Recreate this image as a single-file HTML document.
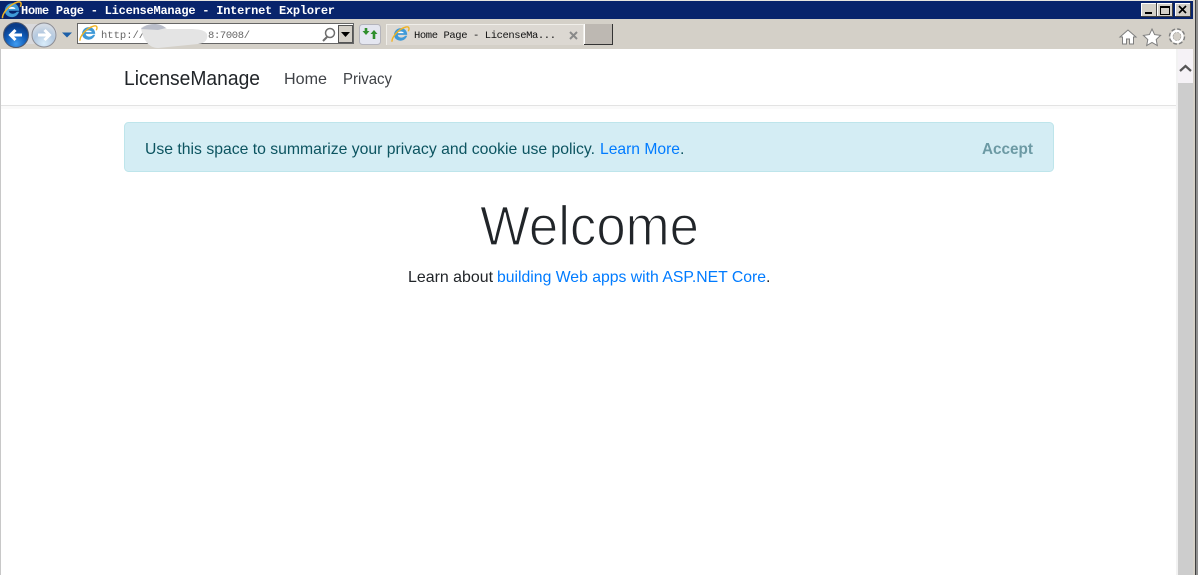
<!DOCTYPE html>
<html><head><meta charset="utf-8"><title>Home Page - LicenseManage</title>
<style>
html,body{margin:0;padding:0;width:1198px;height:575px;overflow:hidden;background:#fff}
svg{display:block}
.u{font-family:"Liberation Sans",sans-serif}
.m{font-family:"Liberation Mono",monospace}
</style></head><body>
<svg width="1198" height="575" viewBox="0 0 1198 575" xmlns="http://www.w3.org/2000/svg">
<defs>
<radialGradient id="b1" cx="50%" cy="85%" r="70%"><stop offset="0" stop-color="#3f9bf0"/><stop offset=".6" stop-color="#0f5cb8"/><stop offset="1" stop-color="#0a3c88"/></radialGradient>
<radialGradient id="b2" cx="50%" cy="85%" r="75%"><stop offset="0" stop-color="#d8ecfa"/><stop offset=".6" stop-color="#b4c9e0"/><stop offset="1" stop-color="#d3dbe5"/></radialGradient>
<g id="ie"><path d="M2 8.500C2 4.500 5 2 8.500 2c3.800 0 6 3 6 6.500H5.500c.2 3 4.800 3.500 7 .8h2c-1.500 3.500-4 4.700-6.500 4.700C5 14 2 12 2 8.500z" fill="#3f9ad8"/><path d="M5.500 6.800h5.700C11 4.800 6 4.500 5.500 6.800z" fill="#fff"/><path d="M0 15C-.5 11 6 3 13 1c3-.8 4 1 2.500 4" fill="none" stroke="#f0b323" stroke-width="1.300"/></g>
</defs>
<rect width="1198" height="575" fill="#fff"/>
<!-- chrome -->
<rect width="1198" height="49" fill="#d4d0c8"/>
<rect x="0" y="0" width="1193" height="1" fill="#e8e6e0"/>
<rect x="0" y="1" width="1193" height="18" fill="#08246c"/>
<use href="#ie" transform="translate(2.500 1) scale(1.150)"/>
<text class="m" x="21" y="14" font-size="12" font-weight="700" fill="#fff" textLength="314" lengthAdjust="spacing">Home Page - LicenseManage - Internet Explorer</text>
<!-- window buttons -->
<g>
<rect x="1141" y="3" width="16" height="14" fill="#d4d0c8"/>
<path d="M1141.500 17V3.500h15" stroke="#fff" fill="none"/><path d="M1156.500 3v13.500H1141" stroke="#404040" fill="none"/>
<rect x="1145" y="12" width="7" height="2" fill="#000"/>
<rect x="1157" y="3" width="16" height="14" fill="#d4d0c8"/>
<path d="M1157.500 17V3.500h15" stroke="#fff" fill="none"/><path d="M1172.500 3v13.500H1157" stroke="#404040" fill="none"/>
<rect x="1160.500" y="6.500" width="9" height="8" fill="none" stroke="#000"/><rect x="1160" y="6" width="10" height="2" fill="#000"/>
<rect x="1175" y="3" width="16" height="14" fill="#d4d0c8"/>
<path d="M1175.500 17V3.500h15" stroke="#fff" fill="none"/><path d="M1190.500 3v13.500H1175" stroke="#404040" fill="none"/>
<path d="M1179 6l7 7M1186 6l-7 7" stroke="#000" stroke-width="1.700"/>
</g>
<!-- back/forward -->
<rect x="3" y="24" width="54" height="20" rx="10" fill="#d9d9dc"/>
<circle cx="16" cy="35" r="12.500" fill="url(#b1)" stroke="#50586a"/>
<path d="M22 35H11M15.500 30l-5 5 5 5" fill="none" stroke="#fff" stroke-width="3"/>
<circle cx="44" cy="35" r="12" fill="url(#b2)" stroke="#8e8e94"/>
<path d="M38 35h11M44.500 30l5 5-5 5" fill="none" stroke="#fff" stroke-width="3"/>
<path d="M62 32.500h10l-5 5z" fill="#1c5fa8"/>
<!-- address -->
<rect x="77.500" y="23.500" width="276" height="20" fill="#fff" stroke="#666"/>
<use href="#ie" transform="translate(80 25) scale(1.050)"/>
<text class="m" x="101" y="38" font-size="10.500" fill="#666">http://</text>
<text class="m" x="208" y="38" font-size="10.500" fill="#666" textLength="42">8:7008/</text>
<path d="M141 28c8-6 20-4 26 1l22 0c9 0 16 1 18 5 1 5-1 9-9 10l-40 4c-9 0-15-8-17-20z" fill="#e4e4e4"/>
<path d="M141 29c6-6 18-7 25-1l-8 2z" fill="#b9bdc9"/>
<circle cx="330" cy="33" r="4.500" fill="none" stroke="#6e6e6e" stroke-width="1.500"/><path d="M327 37l-4 4" stroke="#6e6e6e" stroke-width="2"/>
<rect x="338.500" y="25.500" width="14" height="17" fill="#d4d0c8" stroke="#555"/>
<path d="M341 32h9l-4.500 5z" fill="#000"/>
<!-- refresh -->
<rect x="359.500" y="24.500" width="21" height="20" rx="3" fill="#e4e6f0" stroke="#b4b4bc"/>
<path d="M366 35l-3.500-4h2.200v-3h2.600v3h2.200zM374 30l3.500 4h-2.200v5h-2.600v-5h-2.200z" fill="#2f8f2c"/>
<!-- tab -->
<path d="M386.500 45V24.500h197V45" fill="#dcd8d2" stroke="#f0eee9"/>
<use href="#ie" transform="translate(392 26) scale(1.050)"/>
<text class="m" x="414" y="38" font-size="10.500" fill="#111" textLength="142" lengthAdjust="spacing">Home Page - LicenseMa...</text>
<path d="M570 32l7 7M577 32l-7 7" stroke="#8a8a8a" stroke-width="2"/>
<rect x="584" y="24" width="28" height="21" fill="#bdb8b2"/>
<path d="M584.500 45V24" stroke="#fff"/><path d="M584 44.500h28.500V24" stroke="#333" fill="none"/>
<!-- right icons -->
<path d="M1128 30l-8 7h2.500v7h4v-5h3v5h4v-7h2.500z" fill="#fff" stroke="#7e7e7e"/>
<path d="M1152 29l2.600 5.600 6 .8-4.400 4.100 1.100 6-5.300-3-5.300 3 1.100-6-4.400-4.100 6-.8z" fill="#fff" stroke="#7e7e7e"/>
<circle cx="1177" cy="36.500" r="6" fill="none" stroke="#7e7e7e" stroke-width="4.500" stroke-dasharray="3 1.700"/>
<circle cx="1177" cy="36.500" r="5.500" fill="none" stroke="#fff" stroke-width="2.500"/>
<!-- page edges -->
<rect x="0" y="49" width="1" height="526" fill="#c8c8c8"/>
<rect x="1176" y="49" width="2" height="526" fill="#f2f2f2"/>
<rect x="1178" y="49" width="15" height="526" fill="#f5f2f6"/>
<rect x="1178" y="83" width="15" height="492" fill="#cdcdcd"/>
<path d="M1180 71l5.500-5 5.500 5" fill="none" stroke="#555" stroke-width="2.200"/>
<rect x="1193" y="0" width="2" height="575" fill="#d4d0c8"/>
<rect x="1195" y="0" width="1" height="575" fill="#404040"/>
<rect x="1196" y="0" width="2" height="575" fill="#8f8f8f"/>
<!-- navbar -->
<rect x="1" y="105" width="1175" height="1" fill="#e3e3e3"/>
<rect x="1" y="106" width="1175" height="3" fill="#fafafa"/>
<text class="u" x="124" y="85" font-size="20" fill="#212529" textLength="136" lengthAdjust="spacingAndGlyphs">LicenseManage</text>
<text class="u" x="284" y="84" font-size="16" fill="#3f4246" textLength="43" lengthAdjust="spacingAndGlyphs">Home</text>
<text class="u" x="343" y="84" font-size="16" fill="#3f4246" textLength="49" lengthAdjust="spacingAndGlyphs">Privacy</text>
<!-- alert -->
<rect x="124.500" y="122.500" width="929" height="49" rx="4" fill="#d4edf4" stroke="#bee5eb"/>
<text class="u" x="145" y="154" font-size="16" fill="#0c5460" textLength="450" lengthAdjust="spacingAndGlyphs">Use this space to summarize your privacy and cookie use policy.</text>
<text class="u" x="600" y="154" font-size="16" fill="#007bff" textLength="80" lengthAdjust="spacingAndGlyphs">Learn More</text>
<text class="u" x="680" y="154" font-size="16" fill="#0c5460">.</text>
<text class="u" x="982" y="154" font-size="16" font-weight="700" fill="#6c9aa4" textLength="51" lengthAdjust="spacingAndGlyphs">Accept</text>
<!-- content -->
<text class="u" x="480" y="245" font-size="56" fill="#212529" stroke="#fff" stroke-width="1.300" textLength="219" lengthAdjust="spacingAndGlyphs">Welcome</text>
<text class="u" x="408" y="282" font-size="16" fill="#212529" textLength="85" lengthAdjust="spacingAndGlyphs">Learn about</text>
<text class="u" x="497" y="282" font-size="16" fill="#007bff" textLength="269" lengthAdjust="spacingAndGlyphs">building Web apps with ASP.NET Core</text>
<text class="u" x="766" y="282" font-size="16" fill="#212529">.</text>
</svg>
</body></html>
